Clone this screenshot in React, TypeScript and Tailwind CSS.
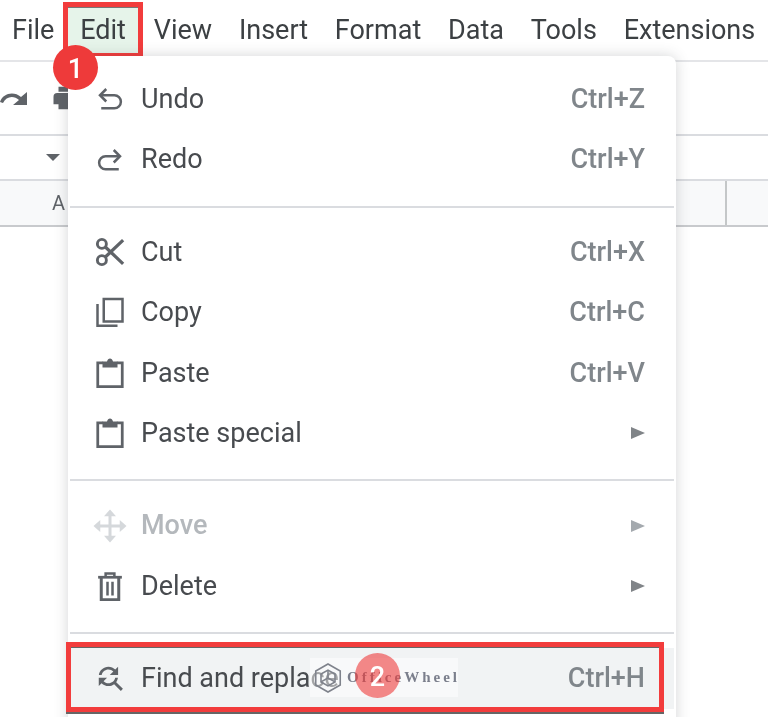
import type { ReactNode } from "react";

const menuTabs = ["File", "Edit", "View", "Insert", "Format", "Data", "Tools", "Extensions"];

function Icon({ children, className = "" }: { children: ReactNode; className?: string }) {
  return (
    <svg viewBox="0 0 24 24" className={`h-[30px] w-[30px] ${className}`} fill="none" stroke="currentColor" strokeWidth="2">
      {children}
    </svg>
  );
}

function ClipboardIcon() {
  return (
    <Icon>
      <path d="M6.500 3.800H2.200v19h19.600v-19h-4.300" strokeWidth="2.200" />
      <path d="M6 7.500V2.800h3.600C10 1.200 10.900.4 12 .4s2 .8 2.400 2.400H18v4.700z" fill="currentColor" stroke="none" />
    </Icon>
  );
}

const undoIcon = (
  <Icon>
    <path d="M9 4 4 9l5 5" />
    <path d="M4 9h11.500a5.200 5.200 0 0 1 0 10.400H5" />
  </Icon>
);

const redoIcon = (
  <Icon>
    <path d="M15 4l5 5-5 5" />
    <path d="M20 9H8.500a5.200 5.200 0 0 0 0 10.400H19" />
  </Icon>
);

const cutIcon = (
  <Icon>
    <circle cx="5.500" cy="5.500" r="3.600" strokeWidth="2.300" />
    <circle cx="5.500" cy="18.500" r="3.600" strokeWidth="2.300" />
    <path d="M8.300 8 22.500 21.500M8.300 16 22.500 2.500" strokeWidth="2.600" />
  </Icon>
);

const copyIcon = (
  <Icon>
    <path d="M7 1.500h15v18H7z" strokeWidth="2" />
    <path d="M2 5.500V23h16" strokeWidth="2" />
  </Icon>
);

const moveIcon = (
  <Icon className="h-[36px] w-[36px]">
    <path d="M12 3v18M3 12h18" strokeWidth="2" />
    <path d="M12 1 8 5.500h8zM12 23l-4-4.500h8zM1 12l4.500-4v8zM23 12l-4.500-4v8z" fill="currentColor" stroke="none" />
  </Icon>
);

const deleteIcon = (
  <Icon>
    <path d="M2.500 5h19" strokeWidth="2.200" />
    <path d="M8.500 5V2h7v3" />
    <path d="M5 5v18h14V5" strokeWidth="2.400" />
    <path d="M10 8.500v11M14 8.500v11" strokeWidth="2" />
  </Icon>
);

const findIcon = (
  <svg viewBox="2 2 21 21" className="h-[29px] w-[29px]" fill="currentColor">
    <path d="M11 6c1.380 0 2.630.56 3.540 1.460L12 10h6V4l-2.050 2.050C14.680 4.780 12.930 4 11 4c-3.530 0-6.430 2.610-6.920 6H6.100c.46-2.280 2.480-4 4.900-4zm5.640 9.140c.66-.9 1.120-1.970 1.280-3.140H15.900c-.46 2.280-2.480 4-4.900 4-1.380 0-2.630-.56-3.540-1.460L10 12H4v6l2.050-2.050C7.320 17.220 9.070 18 11 18c1.550 0 2.980-.51 4.140-1.360L20 21.490 21.490 20l-4.850-4.860z" />
  </svg>
);

function MenuRow({
  icon,
  label,
  shortcut,
  submenu,
  disabled,
  className = "",
}: {
  icon: ReactNode;
  label: string;
  shortcut?: string;
  submenu?: boolean;
  disabled?: boolean;
  className?: string;
}) {
  return (
    <div className={`flex h-[60.4px] items-center pl-[20px] pr-[31px] ${disabled ? "text-[#b4b8bc]" : "text-[#484b4f]"} ${className}`}>
      <span className={`mr-[9px] flex w-[44px] justify-center ${disabled ? "text-[#d5d8db]" : "text-[#5f6368]"}`}>{icon}</span>
      <span className={disabled ? "font-medium" : ""}>{label}</span>
      {shortcut && <span className="ml-auto font-medium text-[#80868b]">{shortcut}</span>}
      {submenu && (
        <span
          className={`ml-auto h-0 w-0 border-y-[6px] border-l-[14px] border-y-transparent ${
            disabled ? "border-l-[#a4a9ae]" : "border-l-[#808488]"
          }`}
        />
      )}
    </div>
  );
}

function Divider({ className }: { className: string }) {
  return <div className={`mx-[2px] h-[2px] bg-[#dadce0] ${className}`} />;
}

function Badge({ n, className }: { n: number; className: string }) {
  return (
    <div className={`absolute flex h-[45px] w-[45px] items-center justify-center rounded-full pt-[3px] text-[27px] font-medium text-white ${className}`}>
      {n}
    </div>
  );
}

export default function App() {
  return (
    <div className="relative h-[717px] w-[768px] overflow-hidden bg-white font-['Roboto',sans-serif] text-[27px] text-[#3c4043] blur-[0.3px]">
      {/* sheet behind the menu */}
      <div className="flex h-[62px] items-center gap-[26.800px] border-b-2 border-[#e4e5e8] pl-[12px]">
        {menuTabs.map((tab) => (
          <span key={tab}>{tab}</span>
        ))}
      </div>
      <div className="flex h-[74px] items-center gap-[23px] border-b-2 border-[#dadce0]">
        <svg viewBox="0 0 28 20" className="h-[20px] w-[28px]" fill="#5f6368">
          <path d="M0 14C3 5 14 3 21 9l6-5v13H13l6-5C14 7 6 8 3 15z" />
        </svg>
        <svg viewBox="0 0 24 24" className="h-[30px] w-[30px]" fill="#5f6368">
          <path d="M19 8H5a3 3 0 0 0-3 3v6h4v4h12v-4h4v-6a3 3 0 0 0-3-3zM18 3H6v4h12z" />
        </svg>
      </div>
      <div className="flex h-[45px] items-center border-b-2 border-[#dadce0] pl-[46px]">
        <span className="h-0 w-0 border-x-[7px] border-t-[7px] border-x-transparent border-t-[#5f6368]" />
      </div>
      <div className="flex h-[46px] items-center justify-between border-b-2 border-[#c8cacd] bg-[#f8f9fa] pl-[52px] text-[20px] text-[#5f6368]">
        <span>A</span>
        <span className="mr-[41px] h-full border-l-2 border-[#c4c7c8]" />
      </div>

      {/* Edit tab highlight */}
      <div className="absolute left-[63px] top-[2px] flex h-[56px] w-[80px] items-center justify-center border-[5px] border-[#f23c3c] bg-[#e6f4ea] shadow-[inset_0_1px_0_#777]">
        Edit
      </div>

      {/* Edit menu */}
      <div className="absolute left-[68px] top-[56px] h-[680px] w-[608px] rounded-t-[8px] bg-white pt-[13px] shadow-[0_0_14px_rgba(60,64,67,0.22)]">
        <MenuRow icon={undoIcon} label="Undo" shortcut="Ctrl+Z" />
        <MenuRow icon={redoIcon} label="Redo" shortcut="Ctrl+Y" />
        <Divider className="mb-[14px] mt-[16px]" />
        <MenuRow icon={cutIcon} label="Cut" shortcut="Ctrl+X" />
        <MenuRow icon={copyIcon} label="Copy" shortcut="Ctrl+C" />
        <MenuRow icon={<ClipboardIcon />} label="Paste" shortcut="Ctrl+V" />
        <MenuRow icon={<ClipboardIcon />} label="Paste special" submenu />
        <Divider className="mb-[14px] mt-[16px]" />
        <MenuRow icon={moveIcon} label="Move" submenu disabled />
        <MenuRow icon={deleteIcon} label="Delete" submenu />
        <Divider className="mb-[14px] mt-[16px]" />
        <div className="mr-[2px] bg-[#f1f3f4]">
          <MenuRow icon={findIcon} label="Find and replace" shortcut="Ctrl+H" className="mr-[-2px]" />
        </div>
      </div>

      {/* Annotation overlays */}
      <div className="absolute left-[66px] top-[642px] h-[70px] w-[598px] border-[5px] border-[#f23c3c] shadow-[0_2px_0_#666,inset_0_1px_0_#666]" />
      <div className="absolute left-[310px] top-[658px] flex h-[39px] w-[148px] items-center gap-[5px] bg-white/50 pl-[4px] font-['Liberation_Serif',serif] text-[15px] font-bold tracking-[3px] text-[#7b7f8c]">
        <svg viewBox="0 0 32 36" className="h-[32px] w-[28px] shrink-0" fill="none" stroke="#7f838c" strokeWidth="1.800">
          <path d="M16 2 30 10v16l-14 8-14-8V10z" />
          <path d="M16 9 24 13.500v9L16 27l-8-4.500v-9z" />
          <path d="M16 9v9l8 4.500M16 18l-8 4.500" />
        </svg>
        <span>OfficeWheel</span>
      </div>
      <Badge n={1} className="left-[53px] top-[45px] bg-[#ee3a3a]" />
      <Badge n={2} className="left-[355px] top-[653px] bg-[#ee3a3a]/60" />
    </div>
  );
}
